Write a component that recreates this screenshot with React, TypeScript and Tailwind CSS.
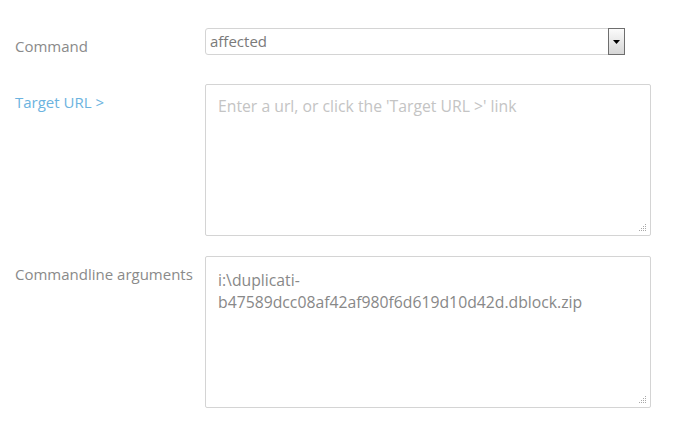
import React from "react";

function Grip() {
  const dots = [
    [6, 0],
    [4, 2],
    [6, 2],
    [2, 4],
    [4, 4],
    [6, 4],
    [0, 6],
    [2, 6],
    [4, 6],
    [6, 6],
  ];
  return (
    <svg width="8" height="8" viewBox="0 0 8 8" className="absolute right-[3px] bottom-[3px]">
      {dots.map(([x, y], i) => (
        <rect key={i} x={x} y={y} width="1" height="1" fill="#a8a8a8" />
      ))}
    </svg>
  );
}

export default function App() {
  const font = { fontFamily: '"Open Sans", "Liberation Sans", sans-serif' };
  return (
    <div className="w-[674px] h-[424px] bg-white" style={font}>
      <div className="flex flex-col pt-[28px]">
        <div className="flex">
          <div className="w-[205px] pl-[15px] pt-[8px] text-[15px] leading-[20px] text-[#8a8a8a]">Command</div>
          <div className="relative flex w-[420px] h-[27px] border border-[#d4d4d4] rounded-[3px] bg-white">
            <div className="flex-1 pl-[4px] text-[15px] leading-[25px] text-[#7a7a7a]">affected</div>
            <div className="w-[17px] h-[27px] -mt-px -mr-px border border-[#6e6e6e] bg-gradient-to-b from-[#fbfbfb] to-[#d6d6d6] flex items-center justify-center">
              <svg width="7" height="4" viewBox="0 0 7 4">
                <path d="M0 0H7L3.5 4Z" fill="#000" />
              </svg>
            </div>
          </div>
        </div>

        <div className="flex mt-[28px]">
          <div className="w-[205px] pl-[15px] pt-[8px] text-[15px] leading-[20px] text-[#6bb3e0]">Target URL &gt;</div>
          <div className="relative w-[446px] h-[152px] border border-[#d4d4d4] rounded-[2px] bg-white pl-[12px] pt-[10px]">
            <div className="text-[15.75px] leading-[22px] text-[#c4c4c4]">Enter a url, or click the 'Target URL &gt;' link</div>
            <Grip />
          </div>
        </div>

        <div className="flex mt-[20px]">
          <div className="w-[205px] pl-[15px] pt-[8px] text-[15px] leading-[20px] text-[#8a8a8a]">Commandline arguments</div>
          <div className="relative w-[446px] h-[152px] border border-[#d4d4d4] rounded-[2px] bg-white pl-[12px] pt-[12px]">
            <div className="text-[15.75px] leading-[22px] text-[#888]">
              i:\duplicati-
              <br />
              b47589dcc08af42af980f6d619d10d42d.dblock.zip
            </div>
            <Grip />
          </div>
        </div>
      </div>
    </div>
  );
}
